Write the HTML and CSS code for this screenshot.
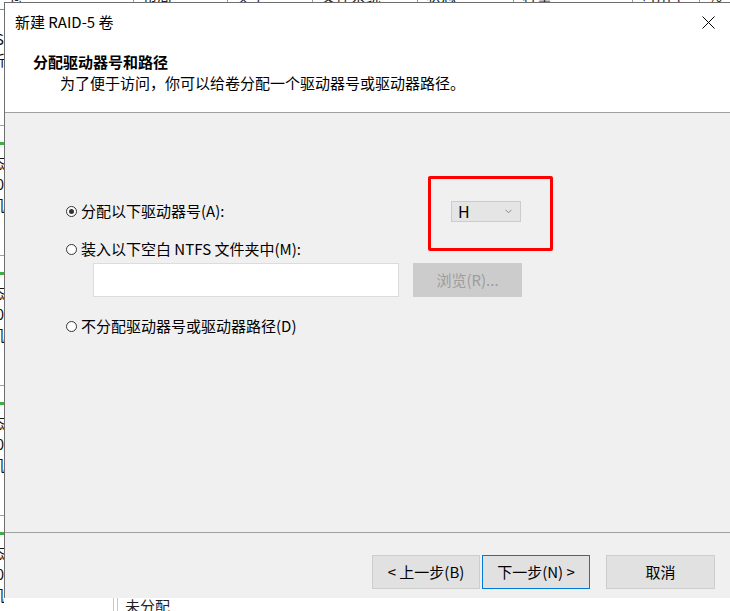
FILE: index.html
```html
<!DOCTYPE html>
<html lang="zh-CN">
<head>
<meta charset="utf-8">
<title>新建 RAID-5 卷</title>
<link rel="stylesheet" href="styles.css">
</head>
<body>
<div class="desktop">
  <div class="bg-window">
    <div class="bg-head">
      <div class="bg-col c1">卷</div>
      <div class="bg-col c2">布局</div>
      <div class="bg-col c3">类型</div>
      <div class="bg-col c4">文件系统</div>
      <div class="bg-col c5">状态</div>
      <div class="bg-col c6">容量</div>
      <div class="bg-col c7">可用空间</div>
      <div class="bg-col c8">%</div>
    </div>
    <div class="bg-main">
      <div class="bg-left">
        <div class="bg-left-inner">
          <div class="bg-top">
            <div class="bg-tline"></div>
            <div class="bg-txt t-s">S</div>
            <div class="bg-txt">新</div>
          </div>
          <div class="disk"><div class="disk-line"></div><div class="disk-bar"></div><div class="bg-txt">态</div><div class="bg-txt">0</div><div class="bg-txt">机</div></div>
          <div class="disk"><div class="disk-line"></div><div class="disk-bar"></div><div class="bg-txt">态</div><div class="bg-txt">0</div><div class="bg-txt">机</div></div>
          <div class="disk"><div class="disk-line"></div><div class="disk-bar"></div><div class="bg-txt">态</div><div class="bg-txt">0</div><div class="bg-txt">机</div></div>
          <div class="disk"><div class="disk-line"></div><div class="disk-bar"></div><div class="bg-txt">态</div><div class="bg-txt">0</div><div class="bg-txt">机</div></div>
        </div>
      </div>
      <div class="bg-right">
        <div class="bg-unalloc"><span class="vbar"></span><span class="vbar"></span><span class="un-txt">未分配</span></div>
      </div>
    </div>
  </div>

  <div class="dialog">
    <div class="titlebar">
      <div class="title">新建 RAID-5 卷</div>
      <svg class="close" width="13" height="13" viewBox="0 0 13 13"><path d="M0.5 0.5 L12.5 12.5 M12.5 0.5 L0.5 12.5" stroke="#000" stroke-width="1" fill="none"/></svg>
    </div>
    <div class="header">
      <div class="h-title">分配驱动器号和路径</div>
      <div class="h-sub">为了便于访问，你可以给卷分配一个驱动器号或驱动器路径。</div>
    </div>
    <div class="body">
      <div class="row row1">
        <label class="opt"><span class="radio checked"></span><span>分配以下驱动器号(A):</span></label>
        <div class="combo"><span>H</span><svg width="7" height="5" viewBox="0 0 7 5"><path d="M0.5 0.8 L3.5 3.8 L6.5 0.8" stroke="#8a8a8a" stroke-width="1" fill="none"/></svg></div>
      </div>
      <div class="row row2">
        <label class="opt"><span class="radio"></span><span>装入以下空白 NTFS 文件夹中(M):</span></label>
      </div>
      <div class="row row3">
        <div class="textbox"></div>
        <div class="btn disabled">浏览(R)...</div>
      </div>
      <div class="row row4">
        <label class="opt"><span class="radio"></span><span>不分配驱动器号或驱动器路径(D)</span></label>
      </div>
    </div>
    <div class="footer">
      <div class="btn wide">&lt; 上一步(B)</div>
      <div class="btn wide default">下一步(N) &gt;</div>
      <div class="btn wide cancel">取消</div>
    </div>
    <div class="annot"></div>
  </div>
</div>
</body>
</html>
```

FILE: styles.css
```css
* { box-sizing: border-box; }
html, body { margin: 0; padding: 0; }
body {
  width: 730px;
  height: 611px;
  overflow: hidden;
  font-family: "Noto Sans CJK SC", "Noto Sans", sans-serif;
  font-size: 15px;
  color: #000;
  background: #fff;
}
.desktop {
  position: relative;
  width: 730px;
  height: 611px;
  overflow: hidden;
  background: #fff;
}

/* background window */
.bg-window { display: flex; flex-direction: column; height: 611px; overflow: hidden; }
.bg-head {
  display: flex;
  height: 3px;
  overflow: hidden;
  flex: none;
}
.bg-col {
  border-right: 1px solid #9a9a9a;
  line-height: 14px;
  margin-top: -11px;
  padding-left: 8px;
  font-size: 15px;
  color: #222;
  height: 20px;
}
.c1 { width: 136px; }
.c2 { width: 95px; }
.c3 { width: 86px; }
.c4 { width: 107px; }
.c5 { width: 97px; }
.c6 { width: 121px; }
.c7 { width: 68px; }
.c8 { width: 30px; border-right: none; }
.bg-main { display: flex; flex: 1; min-height: 0; overflow: hidden; }
.bg-left { width: 4px; overflow: hidden; flex: none; height: 100%; }
.bg-left-inner { width: 14px; margin-left: -10px; }
.bg-top { height: 122px; padding-top: 6px; }
.bg-tline { height: 1px; background: #8a8a8a; margin-bottom: 18px; }
.bg-txt { font-size: 15px; line-height: 21px; text-align: right; color: #111; height: 21px; }
.disk { height: 130px; }
.disk-line { height: 1px; background: #a0a0a0; }
.disk-bar { height: 3px; margin-top: 16px; margin-bottom: 7px; background: #3cb043; }
.bg-right { flex: 1; display: flex; flex-direction: column; justify-content: flex-end; }
.bg-unalloc { display: flex; align-items: flex-start; height: 14px; padding-left: 109px; overflow: hidden; }
.vbar { width: 1px; height: 14px; background: #c8c8c8; margin-right: 3px; }
.un-txt { margin-left: 4px; line-height: 20px; color: #222; margin-top: -1px; }

/* dialog */
.dialog {
  position: absolute;
  left: 4px;
  top: 2px;
  width: 727px;
  height: 596px;
  border-left: 1px solid #6e6e6e;
  border-top: 1px solid #6e6e6e;
  display: flex;
  flex-direction: column;
  background: #f0f0f0;
}
.titlebar {
  height: 38px;
  background: #fff;
  display: flex;
  align-items: center;
  justify-content: space-between;
  padding-left: 10px;
  padding-right: 16px;
  flex: none;
}
.title { font-size: 15px; line-height: 20px; }
.close { display: block; margin-top: 1px; }
.header {
  height: 72px;
  background: #fff;
  padding-left: 28px;
  padding-top: 11px;
  border-bottom: 1px solid #a0a0a0;
  flex: none;
}
.h-title { font-weight: bold; line-height: 20px; }
.h-sub { padding-left: 27px; line-height: 22px; }
.body {
  flex: 1;
  padding-top: 87px;
  padding-left: 61px;
  background: #f0f0f0;
}
.row { display: flex; align-items: center; }
.row1 { height: 22px; }
.row2 { height: 22px; margin-top: 16px; }
.row3 { margin-top: 3px; margin-left: 27px; gap: 14px; }
.row4 { height: 22px; margin-top: 18px; }
.opt { display: flex; align-items: center; line-height: 22px; }
.radio {
  width: 11px;
  height: 11px;
  border: 1px solid #333;
  border-radius: 50%;
  background: #fff;
  margin-right: 4px;
  display: flex;
  align-items: center;
  justify-content: center;
  flex: none;
}
.radio.checked::after {
  content: "";
  width: 5px;
  height: 5px;
  border-radius: 50%;
  background: #333;
}
.row1 .opt { width: 385px; }
.combo {
  width: 70px;
  height: 21px;
  background: #e5e5e5;
  border: 1px solid #cccccc;
  display: flex;
  align-items: center;
  justify-content: space-between;
  padding-left: 6px;
  padding-right: 8px;
  line-height: 19px;
  font-size: 16px;
}
.combo svg { display: block; }
.textbox {
  width: 306px;
  height: 34px;
  background: #fff;
  border: 1px solid #dcdcdc;
}
.btn {
  height: 34px;
  display: flex;
  align-items: center;
  justify-content: center;
  background: #e1e1e1;
  border: 1px solid #cdcdcd;
  line-height: 20px;
}
.btn.disabled {
  width: 109px;
  background: #cccccc;
  border-color: #cccccc;
  color: #9d9d9d;
}
.footer {
  height: 66px;
  border-top: 1px solid #a0a0a0;
  display: flex;
  justify-content: flex-end;
  align-items: flex-start;
  padding-top: 22px;
  padding-right: 16px;
  gap: 2px;
  flex: none;
}
.btn.wide { width: 108px; }
.btn.default { border-color: #0078d7; }
.btn.cancel { margin-left: 14px; width: 109px; }
.annot {
  position: absolute;
  left: 423px;
  top: 173px;
  width: 125px;
  height: 75px;
  border: 3px solid #ff0000;
  border-radius: 2px;
}
```
